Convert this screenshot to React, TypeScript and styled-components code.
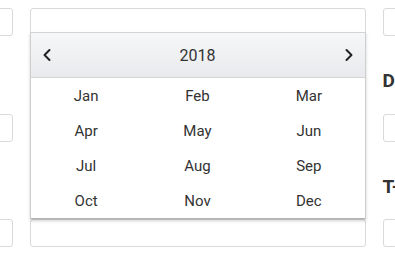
import { createGlobalStyle } from "styled-components";
import styled from "styled-components";
import { ChevronLeft, ChevronRight } from "lucide-react";

const GlobalStyle = createGlobalStyle`
  html, body {
    margin: 0;
    padding: 0;
    overflow: hidden;
    background: #ffffff;
    font-family: Roboto, "Liberation Sans", Arial, sans-serif;
  }
`

const Columns = styled.div`
  display: flex;
  justify-content: center;
  gap: 17px;
  padding-top: 8px;
`

const Column = styled.div`
  flex: 0 0 336px;
  display: flex;
  flex-direction: column;
`

const Field = styled.div`
  position: relative;
`

const Input = styled.div`
  box-sizing: border-box;
  height: 28px;
  border: 1px solid #d9d9d9;
  border-radius: 3px;
  background: #ffffff;
`

const Label = styled.div`
  box-sizing: border-box;
  height: 77.5px;
  padding-top: 34px;
  font-size: 19px;
  line-height: 22px;
  font-weight: 700;
  color: #333333;
  white-space: nowrap;
`

const Popover = styled.div`
  position: absolute;
  top: 24px;
  left: 0;
  right: 0;
  z-index: 10;
  box-sizing: border-box;
  background: #ffffff;
  border: 1px solid #cfcfcf;
  border-top: none;
  border-bottom-color: #b5b5b5;
  box-shadow: 0 2px 3px rgba(0, 0, 0, 0.18);
`

const PopoverHeader = styled.div`
  display: flex;
  align-items: center;
  justify-content: space-between;
  height: 46px;
  padding: 0 6px;
  background: linear-gradient(#f6f7f8, #e8eaed);
  border-top: 1px solid #d4d4d4;
  border-bottom: 1px solid #d4d4d4;
  box-sizing: border-box;
  color: #333333;
`

const NavButton = styled.span`
  display: flex;
  align-items: center;
  justify-content: center;
  width: 20px;
  height: 20px;
  color: #222222;
`

const Year = styled.span`
  font-size: 16px;
  color: #333333;
`

const MonthGrid = styled.div`
  display: grid;
  grid-template-columns: repeat(3, 1fr);
  grid-auto-rows: 35px;
`

const Month = styled.div`
  display: flex;
  align-items: center;
  justify-content: center;
  font-size: 15px;
  color: #333333;
`

const MONTHS = ["Jan", "Feb", "Mar", "Apr", "May", "Jun", "Jul", "Aug", "Sep", "Oct", "Nov", "Dec"]

const MonthPicker = () => (
    <Popover>
        <PopoverHeader>
            <NavButton><ChevronLeft size={20} strokeWidth={2.4}/></NavButton>
            <Year>2018</Year>
            <NavButton><ChevronRight size={20} strokeWidth={2.4}/></NavButton>
        </PopoverHeader>
        <MonthGrid>
            {MONTHS.map((m) => <Month key={m}>{m}</Month>)}
        </MonthGrid>
    </Popover>
)

export default function App() {
    return (
        <>
            <GlobalStyle/>
            <Columns>
                <Column>
                    <Input/>
                    <Label/>
                    <Input/>
                    <Label/>
                    <Input/>
                </Column>
                <Column>
                    <Field>
                        <Input/>
                        <MonthPicker/>
                    </Field>
                    <Label/>
                    <Input/>
                    <Label/>
                    <Input/>
                </Column>
                <Column>
                    <Input/>
                    <Label>Date</Label>
                    <Input/>
                    <Label>T-Date</Label>
                    <Input/>
                </Column>
            </Columns>
        </>
    )
}
